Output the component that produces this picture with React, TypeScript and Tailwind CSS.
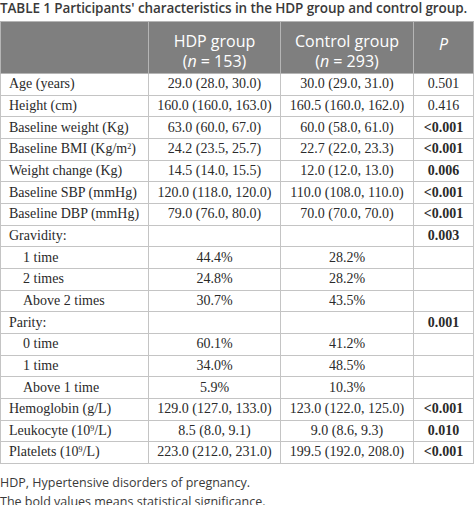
import React from 'react';

type Row = {
    label: React.ReactNode;
    hdp?: string;
    ctrl?: string;
    p?: string;
    bold?: boolean;
    sub?: boolean;
};

const rows: Row[] = [
    { label: 'Age (years)', hdp: '29.0 (28.0, 30.0)', ctrl: '30.0 (29.0, 31.0)', p: '0.501' },
    { label: 'Height (cm)', hdp: '160.0 (160.0, 163.0)', ctrl: '160.5 (160.0, 162.0)', p: '0.416' },
    { label: 'Baseline weight (Kg)', hdp: '63.0 (60.0, 67.0)', ctrl: '60.0 (58.0, 61.0)', p: '<0.001', bold: true },
    {
        label: (
            <>
                Baseline BMI (Kg/m<sup className="text-[8px]">2</sup>)
            </>
        ),
        hdp: '24.2 (23.5, 25.7)',
        ctrl: '22.7 (22.0, 23.3)',
        p: '<0.001',
        bold: true,
    },
    { label: 'Weight change (Kg)', hdp: '14.5 (14.0, 15.5)', ctrl: '12.0 (12.0, 13.0)', p: '0.006', bold: true },
    { label: 'Baseline SBP (mmHg)', hdp: '120.0 (118.0, 120.0)', ctrl: '110.0 (108.0, 110.0)', p: '<0.001', bold: true },
    { label: 'Baseline DBP (mmHg)', hdp: '79.0 (76.0, 80.0)', ctrl: '70.0 (70.0, 70.0)', p: '<0.001', bold: true },
    { label: 'Gravidity:', p: '0.003', bold: true },
    { label: '1 time', hdp: '44.4%', ctrl: '28.2%', sub: true },
    { label: '2 times', hdp: '24.8%', ctrl: '28.2%', sub: true },
    { label: 'Above 2 times', hdp: '30.7%', ctrl: '43.5%', sub: true },
    { label: 'Parity:', p: '0.001', bold: true },
    { label: '0 time', hdp: '60.1%', ctrl: '41.2%', sub: true },
    { label: '1 time', hdp: '34.0%', ctrl: '48.5%', sub: true },
    { label: 'Above 1 time', hdp: '5.9%', ctrl: '10.3%', sub: true },
    { label: 'Hemoglobin (g/L)', hdp: '129.0 (127.0, 133.0)', ctrl: '123.0 (122.0, 125.0)', p: '<0.001', bold: true },
    {
        label: (
            <>
                Leukocyte (10<sup className="text-[8px]">9</sup>/L)
            </>
        ),
        hdp: '8.5 (8.0, 9.1)',
        ctrl: '9.0 (8.6, 9.3)',
        p: '0.010',
        bold: true,
    },
    {
        label: (
            <>
                Platelets (10<sup className="text-[8px]">9</sup>/L)
            </>
        ),
        hdp: '223.0 (212.0, 231.0)',
        ctrl: '199.5 (192.0, 208.0)',
        p: '<0.001',
        bold: true,
    },
];

export default function App() {
    return (
        <div className="w-[474px] h-[505px] overflow-hidden bg-white text-[#2a2a2a]">
            {/* Caption */}
            <div className="h-[21px] whitespace-nowrap font-['Open_Sans',sans-serif] text-[13.5px] font-semibold leading-[17px] tracking-[-0.1px] text-[#3a3a3a]">
                TABLE 1 Participants' characteristics in the HDP group and control group.
            </div>

            <table className="w-[473px] table-fixed border-collapse font-['Liberation_Serif',serif] text-[14px] leading-none">
                <colgroup>
                    <col className="w-[148px]" />
                    <col className="w-[132px]" />
                    <col className="w-[133px]" />
                    <col className="w-[60px]" />
                </colgroup>
                <thead>
                    <tr className="h-[52px] bg-[#7f7f7f] font-['Open_Sans',sans-serif] text-[16px] leading-[20px] text-white">
                        <th className="border border-[#b5b5b5]" />
                        <th className="border border-[#b5b5b5] pt-[6px] text-center font-normal">
                            HDP group
                            <br />(<i>n</i> = 153)
                        </th>
                        <th className="border border-[#b5b5b5] pt-[6px] text-center font-normal">
                            Control group
                            <br />(<i>n</i> = 293)
                        </th>
                        <th className="border border-[#b5b5b5] pb-[8px] text-center font-normal italic">P</th>
                    </tr>
                </thead>
                <tbody>
                    {rows.map((r, i) => (
                        <tr key={i} className="h-[21.67px]">
                            <td
                                className={`border border-[#c4c4c4] whitespace-nowrap ${r.sub ? 'pl-[22px]' : 'pl-[8px]'}`}
                            >
                                {r.label}
                            </td>
                            <td className="border border-[#c4c4c4] text-center whitespace-nowrap">{r.hdp}</td>
                            <td className="border border-[#c4c4c4] text-center whitespace-nowrap">{r.ctrl}</td>
                            <td
                                className={`border border-[#c4c4c4] text-center whitespace-nowrap ${r.bold ? 'font-bold' : ''}`}
                            >
                                {r.p}
                            </td>
                        </tr>
                    ))}
                </tbody>
            </table>

            {/* Footnotes */}
            <div className="mt-[9px] font-['Open_Sans',sans-serif] text-[12.5px] leading-[19px] text-[#3a3a3a]">
                <div>HDP, Hypertensive disorders of pregnancy.</div>
                <div>The bold values means statistical significance.</div>
            </div>
        </div>
    );
}
